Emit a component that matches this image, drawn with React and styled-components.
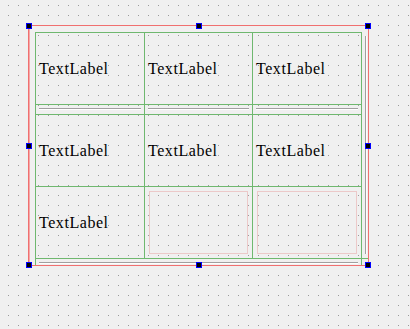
import React from 'react';
import styled, { createGlobalStyle } from 'styled-components';

const GlobalStyle = createGlobalStyle`
  html, body {
    margin: 0;
    padding: 0;
    background: #f0f0f0;
  }
`;

const GREEN = '#6fb86f';

// designer form with its dotted grid
const Canvas = styled.div`
  width: 410px;
  height: 329px;
  box-sizing: border-box;
  padding: 25px 0 0 28px;
  background-color: #f0f0f0;
  background-image: conic-gradient(at 1px 1px, transparent 75%, #9a9a9a 75%);
  background-size: 10px 10px;
  background-position: 8px 5px;
`;

// selected grid layout (red frame)
const Selection = styled.div`
  position: relative;
  width: 341px;
  height: 241px;
  box-sizing: border-box;
  border: 1px solid #f07070;
  box-shadow: inset 1px 0 0 #f5a8a8;
  padding: 6px 0 0 6px;
`;

const Grid = styled.div`
  display: grid;
  grid-template-columns: 109px 108px 109px 7px;
  grid-template-rows: 72px 10px 72px 72px 7px;
`;

const Cell = styled.div`
  box-sizing: border-box;
  min-width: 0;
  border-left: 1px solid ${GREEN};
  border-top: ${(p) => (p.$noTop ? 'none' : `1px solid ${GREEN}`)};
  grid-column: ${(p) => p.$col || 'auto'};
  grid-row: ${(p) => p.$row || 'auto'};
`;

const LabelCell = styled(Cell)`
  display: flex;
  align-items: center;
  padding: 1px 0 0 3px;
  font-family: "Liberation Serif", "DejaVu Serif", serif;
  font-size: 16px;
  letter-spacing: 0.55px;
  color: #000;
  white-space: nowrap;
`;

const HLineCell = styled(Cell)`
  padding: 3px 3px 0 3px;
`;

const VLineCell = styled(Cell)`
  display: flex;
  padding: 4px 0 4px 3px;
`;

const HLine = styled.div`
  height: 1px;
  background: #a0a0a0;
  border-bottom: 1px solid #ffffff;
`;

const VLine = styled.div`
  width: 1px;
  background: #a0a0a0;
  border-right: 1px solid #ffffff;
`;

const EmptyCell = styled(Cell)`
  display: flex;
  padding: 4px;
`;

const Placeholder = styled.div`
  flex: 1;
  border: 1px solid #ecc9c9;
`;

const Handle = styled.div`
  position: absolute;
  width: 6px;
  height: 6px;
  box-sizing: border-box;
  border: 1px solid #0000ff;
  background: #000;
  left: calc(${(p) => p.$x}% - 3px);
  top: calc(${(p) => p.$y}% - 3px);
`;

const handles = [
  [0, 0], [50, 0], [100, 0],
  [0, 50], [100, 50],
  [0, 100], [50, 100], [100, 100],
];

const App = () => {
  return (
    <>
      <GlobalStyle />
      <Canvas>
        <Selection>
          <Grid>
            <LabelCell>TextLabel</LabelCell>
            <LabelCell>TextLabel</LabelCell>
            <LabelCell>TextLabel</LabelCell>
            <VLineCell $noTop $col="4" $row="1 / 5">
              <VLine />
            </VLineCell>

            <HLineCell><HLine /></HLineCell>
            <HLineCell><HLine /></HLineCell>
            <HLineCell><HLine /></HLineCell>

            <LabelCell>TextLabel</LabelCell>
            <LabelCell>TextLabel</LabelCell>
            <LabelCell>TextLabel</LabelCell>

            <LabelCell>TextLabel</LabelCell>
            <EmptyCell><Placeholder /></EmptyCell>
            <EmptyCell><Placeholder /></EmptyCell>

            <HLineCell $col="1 / 4" $row="5"><HLine /></HLineCell>
            <Cell $col="4" $row="5" />
          </Grid>
          {handles.map(([x, y]) => (
            <Handle key={`${x}-${y}`} $x={x} $y={y} />
          ))}
        </Selection>
      </Canvas>
    </>
  );
};

export default App;
